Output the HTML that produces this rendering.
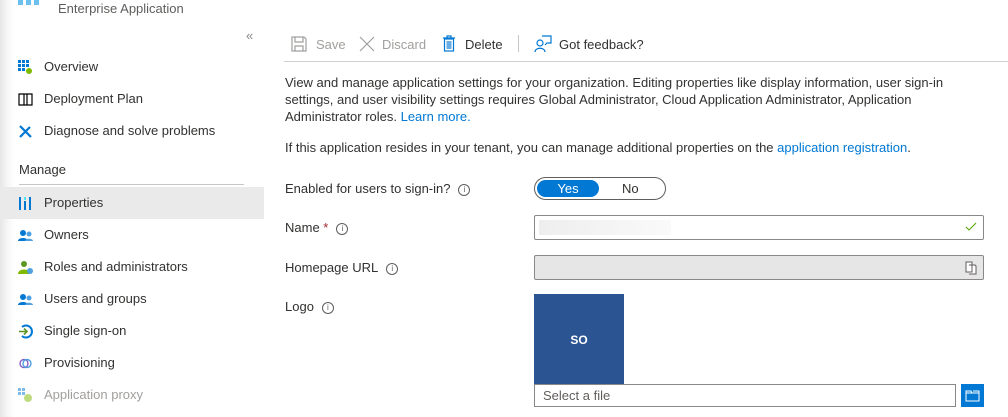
<!DOCTYPE html>
<html><head><meta charset="utf-8"><style>
*{box-sizing:border-box;margin:0;padding:0}
body{width:1008px;height:417px;overflow:hidden;background:#fff;font-family:"Liberation Sans",sans-serif;font-size:13px;color:#323130;position:relative}
.a{position:absolute}
.side{left:0;top:0;width:264px;height:417px;background:linear-gradient(to right,#e6e6e6 0,#f7f7f7 8px,#fff 14px)}
.item{position:absolute;left:0;width:264px;height:32px;line-height:32px;padding-left:44px;font-size:13px}
.ic{position:absolute;left:18px;top:9px;width:15px;height:15px}
.lbl{position:absolute;left:285px;font-size:13px}
.info{display:inline-block;width:12px;height:12px;border:1px solid #605e5c;border-radius:50%;font-size:8px;line-height:10px;text-align:center;margin-left:8px;vertical-align:1px;color:#605e5c}
.inp{position:absolute;left:534px;width:450px;height:25px;border:1px solid #8a8886;border-radius:2px}
a{color:#0078d4;text-decoration:none}
</style></head><body>
<div class="a side"></div>
<div class="a" style="left:18px;top:0;width:22px;height:5px;background:repeating-linear-gradient(to right,#69c0ee 0 5px,transparent 5px 8px)"></div>
<div class="a" style="left:58px;top:1px;font-size:13px;color:#605e5c">Enterprise Application</div>
<div class="a" style="left:246px;top:28px;color:#8a8886;font-size:13px">«</div>

<div class="item" style="top:51px"><svg class="ic" viewBox="0 0 15 15"><g fill="#0078d4"><rect x="0" y="0" width="3" height="3"/><rect x="4" y="0" width="3" height="3"/><rect x="8" y="0" width="3" height="3"/><rect x="0" y="4" width="3" height="3"/><rect x="4" y="4" width="3" height="3"/><rect x="8" y="4" width="3" height="3"/><rect x="0" y="8" width="3" height="3"/><rect x="4" y="8" width="3" height="3"/></g><circle cx="11" cy="11" r="3" fill="#7fba00"/></svg>Overview</div>
<div class="item" style="top:83px"><svg class="ic" viewBox="0 0 15 15"><path d="M1 2h5v11H1zM6 2h3v11H6zM9 2h5v11H9z" fill="none" stroke="#000" stroke-width="1.2"/></svg>Deployment Plan</div>
<div class="item" style="top:115px"><svg class="ic" viewBox="0 0 15 15"><path d="M2 13L12 3M2 2l11 11" stroke="#0078d4" stroke-width="2.2"/></svg>Diagnose and solve problems</div>
<div class="a" style="left:19px;top:162px;font-size:13px;font-weight:normal;color:#323130">Manage</div>
<div class="a" style="left:19px;top:184px;width:225px;height:1px;background:#c8c6c4"></div>
<div class="item" style="top:187px;background:#eaeaea"><svg class="ic" viewBox="0 0 15 15"><g fill="#0078d4"><rect x="1" y="1" width="2" height="13"/><rect x="6" y="5" width="2" height="9"/><rect x="11" y="1" width="2" height="13"/></g><g fill="#50e6ff"><rect x="6" y="1" width="2" height="3"/></g></svg>Properties</div>
<div class="item" style="top:219px"><svg class="ic" viewBox="0 0 15 15"><circle cx="5" cy="5" r="3" fill="#0078d4"/><path d="M0 13c0-4 10-4 10 0z" fill="#0078d4"/><circle cx="11" cy="6" r="2.5" fill="#50a0e0"/><path d="M7 13c0-3 8-3 8 0z" fill="#50a0e0"/></svg>Owners</div>
<div class="item" style="top:251px"><svg class="ic" viewBox="0 0 15 15"><circle cx="6" cy="4" r="3" fill="#5e9624"/><path d="M0 14c0-6 12-6 12 0z" fill="#7fba00"/><circle cx="12" cy="11" r="3" fill="#50a0e0"/></svg>Roles and administrators</div>
<div class="item" style="top:283px"><svg class="ic" viewBox="0 0 15 15"><circle cx="5" cy="5" r="3" fill="#0078d4"/><path d="M0 13c0-4 10-4 10 0z" fill="#0078d4"/><circle cx="11" cy="6" r="2.5" fill="#50a0e0"/><path d="M7 13c0-3 8-3 8 0z" fill="#50a0e0"/></svg>Users and groups</div>
<div class="item" style="top:315px"><svg class="ic" viewBox="0 0 15 15"><path d="M4 3a6 6 0 1 1 0 9" fill="none" stroke="#0078d4" stroke-width="2"/><path d="M1 7.5h8M6 4.5l3 3-3 3" fill="none" stroke="#5e9624" stroke-width="1.6"/></svg>Single sign-on</div>
<div class="item" style="top:347px"><svg class="ic" viewBox="0 0 15 15"><circle cx="6" cy="7.5" r="4" fill="none" stroke="#8661c5" stroke-width="1.4"/><circle cx="9" cy="7.5" r="4" fill="none" stroke="#50a0e0" stroke-width="1.4"/></svg>Provisioning</div>
<div class="item" style="top:379px;color:#a19f9d"><svg class="ic" viewBox="0 0 15 15" opacity=".5"><g fill="#0078d4"><rect x="0" y="0" width="3" height="3"/><rect x="4" y="0" width="3" height="3"/><rect x="0" y="4" width="3" height="3"/><rect x="4" y="4" width="3" height="3"/></g><circle cx="10" cy="10" r="4" fill="#7fba00"/></svg>Application proxy</div>

<!-- toolbar -->
<svg class="a" style="left:291px;top:36px" width="16" height="16" viewBox="0 0 16 16"><path d="M1 1h12l2 2v12H1z M4 1v5h8V1 M4 15v-5h8v5" fill="none" stroke="#a19f9d" stroke-width="1.2"/></svg>
<div class="a" style="left:316px;top:37px;color:#a19f9d">Save</div>
<svg class="a" style="left:359px;top:36px" width="16" height="16" viewBox="0 0 16 16"><path d="M1 1l14 14M15 1L1 15" stroke="#a19f9d" stroke-width="1.2"/></svg>
<div class="a" style="left:382px;top:37px;color:#a19f9d">Discard</div>
<svg class="a" style="left:442px;top:35px" width="14" height="17" viewBox="0 0 14 17"><path d="M1 3h12M5 3V1h4v2" fill="none" stroke="#0078d4" stroke-width="1.2"/><rect x="2.5" y="4" width="9" height="12" fill="none" stroke="#0078d4" stroke-width="1.2"/><rect x="4.5" y="6" width="5" height="8" fill="#0078d4" opacity=".6"/></svg>
<div class="a" style="left:465px;top:37px">Delete</div>
<div class="a" style="left:518px;top:35px;width:1px;height:17px;background:#c8c6c4"></div>
<svg class="a" style="left:534px;top:35px" width="18" height="18" viewBox="0 0 18 18"><circle cx="6" cy="8" r="3" fill="none" stroke="#0078d4" stroke-width="1.2"/><path d="M1 17c0-5 10-5 10 0M8 1h9v7h-4l-2 2" fill="none" stroke="#0078d4" stroke-width="1.2"/></svg>
<div class="a" style="left:559px;top:37px">Got feedback?</div>
<div class="a" style="left:284px;top:61px;width:724px;height:1px;background:#d2d0ce"></div>

<div class="a" style="left:285px;top:74px;width:700px;line-height:17px">View and manage application settings for your organization. Editing properties like display information, user sign-in settings, and user visibility settings requires Global Administrator, Cloud Application Administrator, Application Administrator roles. <a>Learn more.</a></div>
<div class="a" style="left:285px;top:139px;line-height:17px">If this application resides in your tenant, you can manage additional properties on the <a>application registration</a>.</div>

<div class="lbl" style="top:181px">Enabled for users to sign-in?<span class="info">i</span></div>
<div class="a" style="left:534px;top:177px;width:132px;height:23px;border:1px solid #605e5c;border-radius:12px"></div>
<div class="a" style="left:537px;top:180px;width:62px;height:17px;background:#0078d4;border-radius:9px;color:#fff;text-align:center;line-height:17px">Yes</div>
<div class="a" style="left:622px;top:180px;line-height:17px">No</div>

<div class="lbl" style="top:220px">Name <span style="color:#a4262c">*</span><span class="info">i</span></div>
<div class="inp" style="top:215px"><div class="a" style="left:4px;top:4px;width:132px;height:15px;background:linear-gradient(to right,#eee,#f4f4f4,#fafafa)"></div><svg class="a" style="left:430px;top:6px" width="12" height="10" viewBox="0 0 12 10"><path d="M1 5l3 3 7-7" fill="none" stroke="#57a300" stroke-width="1"/></svg></div>

<div class="lbl" style="top:260px">Homepage URL<span class="info">i</span></div>
<div class="inp" style="top:255px;background:#e6e6e6"><svg class="a" style="left:430px;top:5px" width="12" height="14" viewBox="0 0 12 14"><path d="M1 1h6v10H1zM4 4h6l1 1v8H4" fill="#fff" stroke="#605e5c" stroke-width="1"/></svg></div>

<div class="lbl" style="top:299px">Logo<span class="info">i</span></div>
<div class="a" style="left:534px;top:294px;width:90px;height:90px;background:#2b5592;color:#fff;font-weight:bold;font-size:12px;text-align:center;line-height:92px">SO</div>
<div class="a" style="left:534px;top:384px;width:422px;height:23px;border:1px solid #8a8886;color:#605e5c;padding-left:8px;line-height:21px">Select a file</div>
<div class="a" style="left:961px;top:384px;width:23px;height:23px;background:#0078d4"><svg class="a" style="left:4px;top:5px" width="15" height="13" viewBox="0 0 15 13"><path d="M1 4h13v8H1zM1 4V2h5l1 2M8 2h6v2" fill="none" stroke="#fff" stroke-width="1"/></svg></div>
</body></html>
